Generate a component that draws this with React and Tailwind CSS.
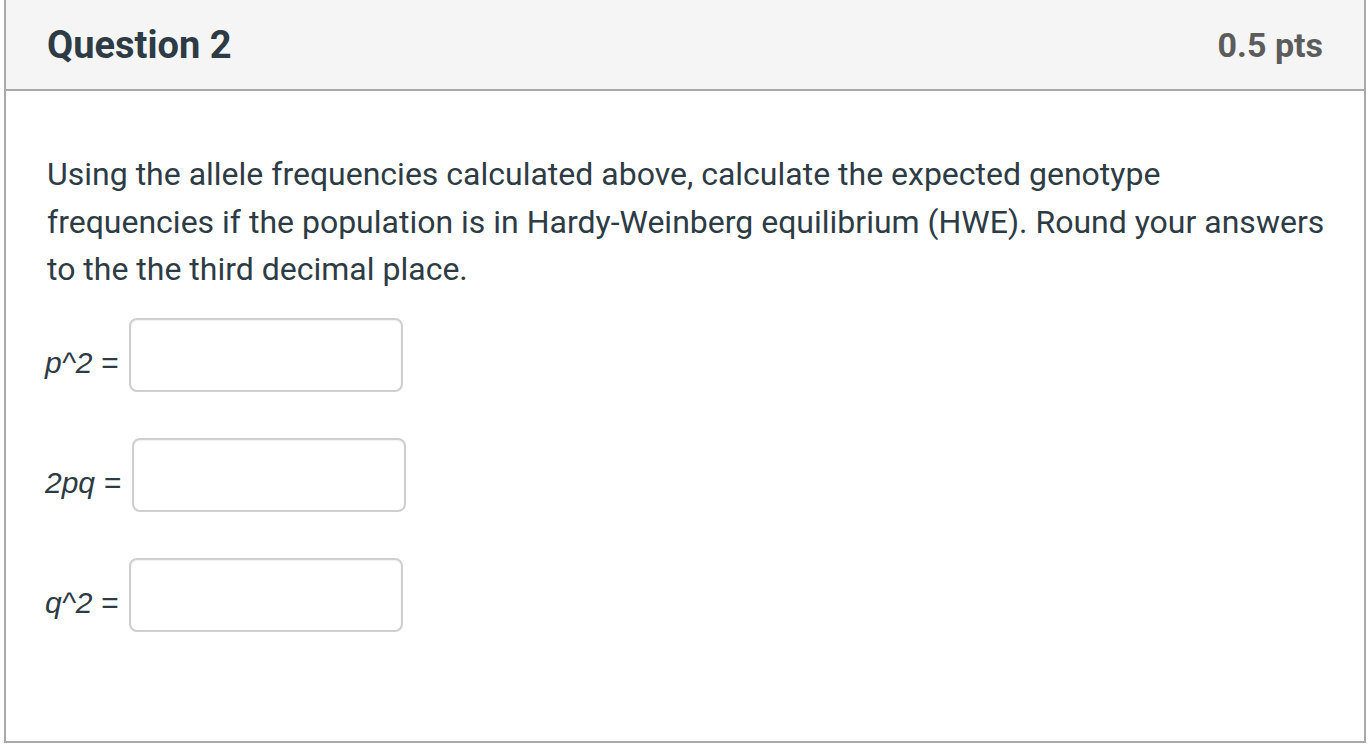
import React from 'react';

const answers = [
  { id: 'p2', label: 'p^2 =' },
  { id: 'pq', label: '2pq =' },
  { id: 'q2', label: 'q^2 =' },
];

// One blank with its italic label
const AnswerRow = ({ id, label }) => (
  <div className="flex items-end gap-[11px]">
    <label
      htmlFor={id}
      className="italic text-[30px] leading-none mb-[14px] text-[#2d3b45]"
      style={{ fontFamily: '"Liberation Sans", Arial, sans-serif' }}
    >
      {label}
    </label>
    <input
      id={id}
      type="text"
      className="w-[274px] h-[74px] border-2 border-[#cfcfcf] rounded-[8px] bg-white px-3 text-[28px] outline-none shadow-[inset_0_1px_2px_rgba(0,0,0,0.06)]"
    />
  </div>
);

export default function App() {
  return (
    <div className="bg-white min-h-[756px] pl-[4px] pr-[6px]" style={{ fontFamily: 'Roboto, "Noto Sans", sans-serif' }}>
      <div className="h-[743px] border-2 border-t-0 border-[#a9a9a9] flex flex-col">
        {/* Header */}
        <div className="h-[91px] shrink-0 bg-[#f5f5f5] border-b-2 border-[#a9a9a9] flex items-center justify-between px-[41px]">
          <h2 className="text-[38px] font-bold text-[#2d3b45] leading-none">Question 2</h2>
          <span className="text-[34px] font-bold text-[#5c5c5c] leading-none">0.5 pts</span>
        </div>

        {/* Body */}
        <div className="pl-[41px] pr-[39px] pt-[60px]">
          <p className="text-[32px] leading-[47.5px] text-[#2d3b45]">
            Using the allele frequencies calculated above, calculate the expected genotype frequencies if the population is in Hardy-Weinberg equilibrium (HWE). Round your answers to the the third decimal place.
          </p>
          <div className="mt-[24px] flex flex-col gap-[46px] -ml-[2px]">
            {answers.map((a) => (
              <AnswerRow key={a.id} {...a} />
            ))}
          </div>
        </div>
      </div>
    </div>
  );
}
